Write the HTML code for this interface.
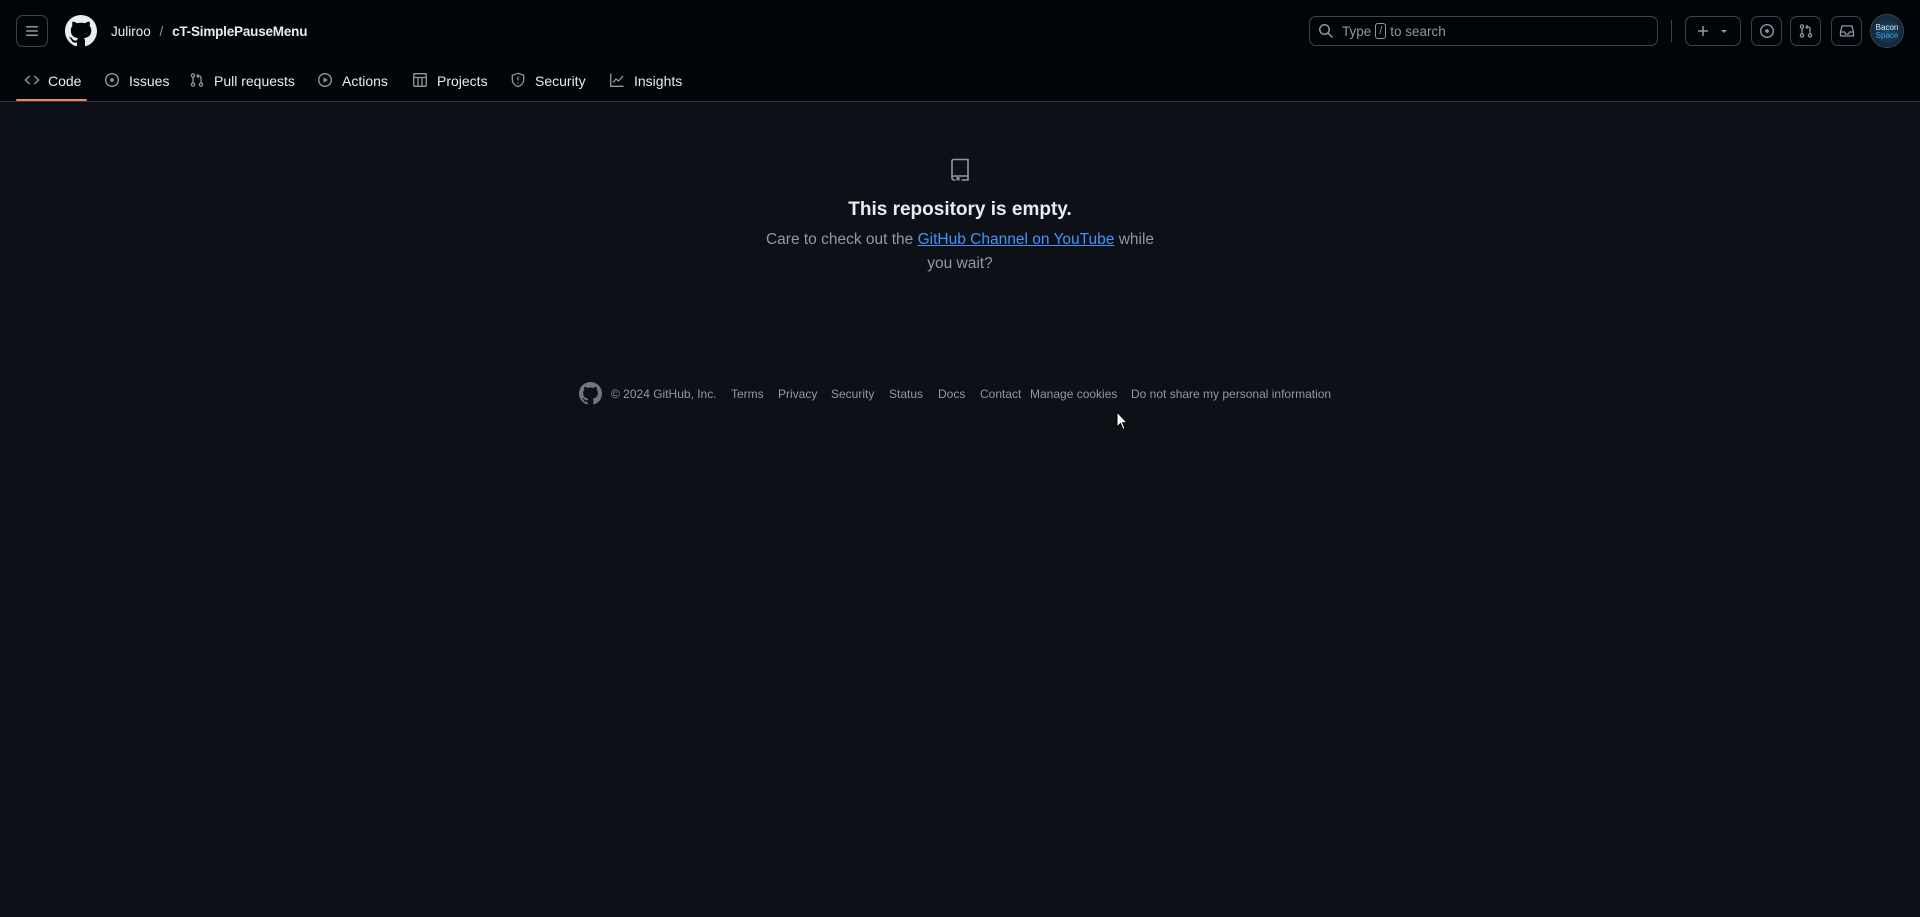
<!DOCTYPE html>
<html><head><meta charset="utf-8"><style>
*{box-sizing:border-box;margin:0;padding:0}
body{width:1920px;height:917px;background:#0d1117;font-family:"Liberation Sans",sans-serif;color:#e6edf3;position:relative;overflow:hidden}
.hdr{position:absolute;left:0;top:0;width:1920px;height:102px;background:#010409;border-bottom:1px solid #30363d}
.a{position:absolute}
.btn{position:absolute;border:1px solid #3d444d;border-radius:7px;display:flex;align-items:center;justify-content:center}
.tab{position:absolute;top:72px;font-size:14px;color:#e6edf3;line-height:18px}
svg{display:block}
.ti{position:absolute;top:72px}
.ft{position:absolute;top:387px;font-size:12px;color:#9198a1;line-height:14px}
</style></head><body>
<div class="hdr">
 <div class="btn" style="left:16px;top:15px;width:32px;height:32px"><svg width="16" height="16" viewBox="0 0 16 16" fill="#9198a1"><rect x="2" y="3" width="12" height="1.5" rx=".75"/><rect x="2" y="7.25" width="12" height="1.5" rx=".75"/><rect x="2" y="11.5" width="12" height="1.5" rx=".75"/></svg></div>
 <svg class="a" style="left:65px;top:15px" width="32" height="32" viewBox="0 0 16 16" fill="#e6edf3"><path d="M8 0C3.58 0 0 3.58 0 8c0 3.54 2.29 6.530 5.47 7.59.4.07.55-.17.55-.38 0-.19-.01-.82-.01-1.49-2.01.37-2.53-.49-2.69-.94-.09-.23-.48-.94-.82-1.13-.28-.15-.68-.52-.01-.53.63-.01 1.08.58 1.23.82.72 1.21 1.87.87 2.33.66.07-.52.28-.87.51-1.07-1.78-.2-3.64-.89-3.64-3.95 0-.87.31-1.59.82-2.15-.08-.2-.36-1.02.08-2.12 0 0 .67-.21 2.2.82.64-.18 1.32-.27 2-.27.68 0 1.36.09 2 .27 1.53-1.04 2.2-.82 2.2-.82.44 1.1.16 1.92.08 2.12.51.56.82 1.27.82 2.150 0 3.07-1.87 3.75-3.65 3.95.29.25.54.73.54 1.48 0 1.07-.01 1.93-.01 2.2 0 .21.15.46.55.38A8.013 8.013 0 0016 8c0-4.42-3.58-8-8-8z"/></svg>
 <div class="a" style="left:111px;top:23px;font-size:13.5px;line-height:18px">Juliroo <span style="color:#9198a1;margin:0 5px">/</span> <span style="font-weight:700;letter-spacing:-0.2px">cT-SimplePauseMenu</span></div>
 <div class="btn" style="left:1309px;top:16px;width:349px;height:30px;justify-content:flex-start;padding-left:8px;color:#9198a1;font-size:13.5px">
  <svg width="16" height="16" viewBox="0 0 16 16" fill="none" stroke="#9198a1" stroke-width="1.5"><circle cx="6.5" cy="6.5" r="4.75"/><path d="M10 10l4.5 4.5"/></svg>
  <span style="margin-left:8px">Type</span><span style="display:inline-block;border:1px solid #9198a1;border-radius:3px;width:11px;height:16px;font-size:11px;line-height:14px;text-align:center;margin:0 4px">/</span><span>to search</span></div>
 <div class="a" style="left:1671px;top:20px;width:1px;height:22px;background:#3d444d"></div>
 <div class="btn" style="left:1685px;top:16px;width:56px;height:30px"><svg width="36" height="16" viewBox="0 0 36 16" fill="#9198a1"><path d="M7.25 3h1.5v4.25H13v1.5H8.75V13h-1.5V8.75H3v-1.5h4.25z"/><path d="M26 7h6l-3 3z"/></svg></div>
 <div class="btn" style="left:1751px;top:16px;width:31px;height:30px"><svg width="16" height="16" viewBox="0 0 16 16" fill="none" stroke="#9198a1" stroke-width="1.4"><circle cx="8" cy="8" r="6.3"/><circle cx="8" cy="8" r="1.2" fill="#9198a1"/></svg></div>
 <div class="btn" style="left:1790px;top:16px;width:31px;height:30px"><svg width="16" height="16" viewBox="0 0 16 16" fill="none" stroke="#9198a1" stroke-width="1.3"><circle cx="4" cy="3.5" r="1.6"/><circle cx="4" cy="12.5" r="1.6"/><circle cx="12" cy="12.5" r="1.6"/><path d="M4 5v6M12 11V5.5a1.5 1.5 0 00-1.5-1.5H8M9.5 2.3L8 4l1.5 1.7"/></svg></div>
 <div class="btn" style="left:1831px;top:16px;width:31px;height:30px"><svg width="16" height="16" viewBox="0 0 16 16" fill="none" stroke="#9198a1" stroke-width="1.3"><path d="M3 3h10l1.5 6v4h-13V9zM1.5 9h4l1 2h3l1-2h4"/></svg></div>
 <div class="a" style="left:1870px;top:14px;width:34px;height:34px;border-radius:50%;background:radial-gradient(#1e4866,#0b1a2a);border:1px solid #3d444d;font-size:8px;line-height:8px;text-align:center;padding-top:9px;color:#dfe8f0">Bacon<br><span style="color:#3aa0e0">Space</span></div>

 <svg class="ti" style="left:24px" width="16" height="16" viewBox="0 0 16 16" fill="none" stroke="#9198a1" stroke-width="1.4"><path d="M5.5 4L1.5 8l4 4M10.5 4l4 4-4 4"/></svg>
 <div class="tab" style="left:48px">Code</div>
 <svg class="ti" style="left:104px" width="16" height="16" viewBox="0 0 16 16" fill="none" stroke="#9198a1" stroke-width="1.4"><circle cx="8" cy="8" r="6.3"/><circle cx="8" cy="8" r="1.2" fill="#9198a1"/></svg>
 <div class="tab" style="left:129px">Issues</div>
 <svg class="ti" style="left:189px" width="16" height="16" viewBox="0 0 16 16" fill="none" stroke="#9198a1" stroke-width="1.3"><circle cx="4" cy="3.5" r="1.6"/><circle cx="4" cy="12.5" r="1.6"/><circle cx="12" cy="12.5" r="1.6"/><path d="M4 5v6M12 11V5.5a1.5 1.5 0 00-1.5-1.5H8M9.5 2.3L8 4l1.5 1.7"/></svg>
 <div class="tab" style="left:214px">Pull requests</div>
 <svg class="ti" style="left:317px" width="16" height="16" viewBox="0 0 16 16" fill="none" stroke="#9198a1" stroke-width="1.4"><circle cx="8" cy="8" r="6.3"/><path d="M6.5 5.3v5.4L10.7 8z" fill="#9198a1" stroke="none"/></svg>
 <div class="tab" style="left:342px">Actions</div>
 <svg class="ti" style="left:412px" width="16" height="16" viewBox="0 0 16 16" fill="none" stroke="#9198a1" stroke-width="1.3"><rect x="1.7" y="1.7" width="12.6" height="12.6" rx="1"/><path d="M1.7 5.5h12.6M6 5.5v8.8M10 5.5v8.8"/></svg>
 <div class="tab" style="left:437px">Projects</div>
 <svg class="ti" style="left:510px" width="16" height="16" viewBox="0 0 16 16" fill="none" stroke="#9198a1" stroke-width="1.3"><path d="M8 1.3l5.7 2v4.5c0 3.3-2.5 5.7-5.7 6.9-3.2-1.2-5.7-3.6-5.7-6.9V3.3z"/><path d="M8 4.5v4M8 10.3v1" /></svg>
 <div class="tab" style="left:535px">Security</div>
 <svg class="ti" style="left:609px" width="16" height="16" viewBox="0 0 16 16" fill="none" stroke="#9198a1" stroke-width="1.3"><path d="M1.7 1.5v12.8h12.8M4 10.5l3-3.5 2.5 2 4.5-5"/></svg>
 <div class="tab" style="left:634px">Insights</div>
 <div class="a" style="left:16px;top:99px;width:71px;height:2px;background:#f78166;border-radius:2px"></div>
</div>

<svg class="a" style="left:950px;top:158px" width="20" height="24" viewBox="0 0 20 24" fill="none" stroke="#9198a1" stroke-width="1.6"><path d="M2 20V3a1.5 1.5 0 011.5-1.5H18V18H4a2 2 0 00-2 2 2 2 0 002 2h1.5M11.5 22H18v-4"/><path d="M6.5 19v4l1.5-1.2 1.5 1.2v-4z" fill="#9198a1" stroke="none"/></svg>
<div class="a" style="left:0;top:198px;width:1920px;text-align:center;font-size:19px;font-weight:700;line-height:24px">This repository is empty.</div>
<div class="a" style="left:755px;top:228px;width:410px;text-align:center;font-size:15.5px;line-height:24px;color:#9198a1">Care to check out the <span style="color:#4493f8;text-decoration:underline">GitHub Channel on YouTube</span> while you wait?</div>

<svg class="a" style="left:579px;top:382px" width="23" height="23" viewBox="0 0 16 16" fill="#6e7681"><path d="M8 0C3.58 0 0 3.58 0 8c0 3.54 2.29 6.53 5.47 7.59.4.07.55-.17.55-.38 0-.19-.01-.82-.01-1.49-2.01.37-2.53-.49-2.69-.94-.09-.23-.48-.94-.82-1.13-.28-.15-.68-.52-.01-.53.63-.01 1.08.58 1.23.82.72 1.21 1.87.87 2.33.66.07-.52.28-.87.51-1.07-1.78-.2-3.64-.89-3.64-3.95 0-.87.31-1.59.82-2.15-.08-.2-.36-1.02.08-2.12 0 0 .67-.21 2.2.82.64-.18 1.32-.27 2-.27.68 0 1.36.09 2 .27 1.53-1.04 2.2-.82 2.2-.82.44 1.1.16 1.92.08 2.12.51.56.82 1.27.82 2.15 0 3.07-1.87 3.75-3.65 3.95.29.25.54.73.54 1.48 0 1.07-.01 1.93-.01 2.2 0 .21.15.46.55.38A8.013 8.013 0 0016 8c0-4.42-3.58-8-8-8z"/></svg>
<div class="ft" style="left:611px">© 2024 GitHub, Inc.</div>
<div class="ft" style="left:731px">Terms</div>
<div class="ft" style="left:778px">Privacy</div>
<div class="ft" style="left:831px">Security</div>
<div class="ft" style="left:889px">Status</div>
<div class="ft" style="left:938px">Docs</div>
<div class="ft" style="left:980px">Contact</div>
<div class="ft" style="left:1030px">Manage cookies</div>
<div class="ft" style="left:1131px">Do not share my personal information</div>

<svg class="a" style="left:1116px;top:411px" width="14" height="20" viewBox="0 0 14 20"><path d="M1 1v15l3.5-3.5 2.5 6 2-1-2.5-5.8H11z" fill="#fff" stroke="#000" stroke-width="1"/></svg>
</body></html>
